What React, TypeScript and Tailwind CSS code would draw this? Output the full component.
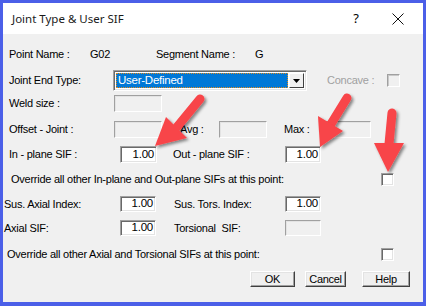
import React from "react";

type EditProps = { w: string; value?: string; disabled?: boolean };

const Edit = ({ w, value, disabled }: EditProps) => {
    const look = disabled
        ? "bg-[#f0f0f0] border border-t-[#a0a0a0] border-l-[#a0a0a0] border-b-white border-r-white shadow-[inset_1px_1px_0_#e3e3e3]"
        : "bg-white border border-t-[#a0a0a0] border-l-[#a0a0a0] border-b-white border-r-white shadow-[inset_1px_1px_0_#696969,inset_-1px_-1px_0_#e3e3e3]";
    return (
        <div className={`${w} h-full ${look} flex items-center justify-end pr-[2px] text-[11.5px] text-black`}>
            {value}
        </div>
    );
};

const Check = ({ disabled }: { disabled?: boolean }) => (
    <div
        className={`w-[13px] h-[13px] shrink-0 border border-t-[#a0a0a0] border-l-[#a0a0a0] border-b-white border-r-white ${
            disabled ? "bg-[#f0f0f0] shadow-[inset_1px_1px_0_#c8c8c8]" : "bg-white shadow-[inset_1px_1px_0_#696969,inset_-1px_-1px_0_#e3e3e3]"
        }`}
    />
);

const Btn = ({ w, label, cls }: { w: string; label: string; cls?: string }) => (
    <div
        className={`${w} ${cls ?? ""} h-full flex items-center justify-center bg-[#f0f0f0] border border-t-white border-l-white border-b-[#404040] border-r-[#404040] shadow-[inset_-1px_-1px_0_#a0a0a0,inset_1px_1px_0_#e3e3e3] text-[11px] tracking-[-0.3px]`}
    >
        {label}
    </div>
);

const Arrow = ({ tail, base, tip, c1, c2 }: { tail: number[]; base: number[]; tip: number[]; c1: number[]; c2: number[] }) => (
    <g filter="url(#shadow)">
        <line x1={tail[0]} y1={tail[1]} x2={base[0]} y2={base[1]} stroke="#f84448" strokeWidth="9" strokeLinecap="round" />
        <polygon points={`${c1[0]},${c1[1]} ${tip[0]},${tip[1]} ${c2[0]},${c2[1]}`} fill="#f84448" />
    </g>
);

const App = () => {
    return (
        <div className="relative w-[426px] h-[306px] font-['Liberation_Sans',Arial,sans-serif] text-black">
            <div className="w-full h-full flex flex-col border-[3px] border-b-4 border-[#4b5fe8] bg-[#f0f0f0]">
                {/* title bar */}
                <div className="h-[31px] bg-white flex items-center pl-[9px] shrink-0">
                    <span className="font-['Noto_Sans',sans-serif] text-[11.5px] text-[#1a1a1a]">Joint Type &amp; User SIF</span>
                    <div className="grow"></div>
                    <span className="font-['Noto_Sans',sans-serif] text-[13px] mr-[33px]">?</span>
                    <svg width="12" height="12" viewBox="0 0 12 12" className="mr-[19px]">
                        <path d="M0.5 0.5 L11.5 11.5 M11.5 0.5 L0.5 11.5" stroke="#111" strokeWidth="1" />
                    </svg>
                </div>

                {/* body */}
                <div className="flex flex-col pl-[6px] text-[11px] tracking-[-0.25px]">
                    <div className="mt-[12px] h-[16px] flex items-center">
                        <span className="w-[81px] shrink-0">Point Name :</span>
                        <span className="w-[66px] shrink-0">G02</span>
                        <span className="w-[99px] shrink-0">Segment Name :</span>
                        <span>G</span>
                    </div>

                    <div className="mt-[8px] h-[21px] flex items-center">
                        <span className="w-[104px] shrink-0">Joint End Type:</span>
                        <div className="w-[194px] h-full shrink-0 flex border border-t-[#a0a0a0] border-l-[#a0a0a0] border-b-white border-r-white shadow-[inset_1px_1px_0_#696969,inset_-1px_-1px_0_#e3e3e3] bg-white p-[2px]">
                            <div className="flex-1 bg-[#0078d7] outline-1 outline-dotted outline-[#e08a1e] -outline-offset-1 flex items-center pl-[2px] text-white text-[11.5px]">
                                User-Defined
                            </div>
                            <div className="w-[15px] ml-[1px] flex items-center justify-center bg-[#f0f0f0] border border-t-white border-l-white border-b-[#404040] border-r-[#404040]">
                                <svg width="7" height="4" viewBox="0 0 7 4"><path d="M0 0 H7 L3.5 4 Z" fill="#000" /></svg>
                            </div>
                        </div>
                        <span className="w-[20px] shrink-0"></span>
                        <span className="w-[60px] shrink-0 text-[#a0a0a0]">Concave :</span>
                        <Check disabled />
                    </div>

                    <div className="mt-[4px] h-[17px] flex items-center">
                        <span className="w-[105px] shrink-0">Weld size :</span>
                        <Edit w="w-[48px]" disabled />
                    </div>

                    <div className="mt-[9px] h-[17px] flex items-center">
                        <span className="w-[105px] shrink-0">Offset - Joint :</span>
                        <Edit w="w-[48px]" disabled />
                        <span className="w-[18px] shrink-0"></span>
                        <span className="w-[39px] shrink-0">Avg :</span>
                        <Edit w="w-[48px]" disabled />
                        <span className="w-[17px] shrink-0"></span>
                        <span className="w-[39px] shrink-0">Max :</span>
                        <Edit w="w-[48px]" disabled />
                    </div>

                    <div className="mt-[8px] h-[17px] flex items-center">
                        <span className="w-[111px] shrink-0">In - plane SIF :</span>
                        <Edit w="w-[37px]" value="1.00" />
                        <span className="w-[16px] shrink-0"></span>
                        <span className="w-[112px] shrink-0">Out - plane SIF :</span>
                        <Edit w="w-[36px]" value="1.00" />
                    </div>

                    <div className="mt-[10px] h-[13px] flex items-center">
                        <span className="pl-[2px]">Override all other In-plane and Out-plane SIFs at this point:</span>
                        <div className="ml-auto mr-[29px]"><Check /></div>
                    </div>

                    <div className="mt-[10px] h-[16px] flex items-center">
                        <span className="w-[116px] -ml-[5px] shrink-0">Sus. Axial Index:</span>
                        <Edit w="w-[36px]" value="1.00" />
                        <span className="w-[18px] shrink-0"></span>
                        <span className="w-[111px] shrink-0">Sus. Tors. Index:</span>
                        <Edit w="w-[36px]" value="1.00" />
                    </div>

                    <div className="mt-[8px] h-[16px] flex items-center">
                        <span className="w-[116px] -ml-[5px] shrink-0">Axial SIF:</span>
                        <Edit w="w-[36px]" value="1.00" />
                        <span className="w-[18px] shrink-0"></span>
                        <span className="w-[111px] shrink-0 whitespace-pre">Torsional  SIF:</span>
                        <Edit w="w-[36px]" disabled />
                    </div>

                    <div className="mt-[12px] h-[13px] flex items-center">
                        <span className="-ml-[2px]">Override all other Axial and Torsional SIFs at this point:</span>
                        <div className="ml-auto mr-[29px]"><Check /></div>
                    </div>

                    <div className="mt-[10px] h-[16px] flex justify-end mr-[13px]">
                        <Btn w="w-[45px]" label="OK" />
                        <Btn w="w-[41px]" label="Cancel" cls="ml-[10px]" />
                        <Btn w="w-[48px]" label="Help" cls="ml-[16px]" />
                    </div>
                </div>
            </div>

            {/* red annotation arrows */}
            <svg className="absolute top-0 left-0 pointer-events-none" width="426" height="306" viewBox="0 0 426 306">
                <defs>
                    <filter id="shadow" x="-30%" y="-30%" width="160%" height="160%">
                        <feDropShadow dx="2" dy="2" stdDeviation="1.5" floodColor="#000" floodOpacity="0.45" />
                    </filter>
                </defs>
                <Arrow tail={[200, 99]} base={[177, 127]} tip={[155, 146]} c1={[166, 117]} c2={[187, 138]} />
                <Arrow tail={[347, 98]} base={[331, 124]} tip={[320, 147]} c1={[318, 116]} c2={[343, 131]} />
                <Arrow tail={[392, 113]} base={[389, 144]} tip={[388, 172]} c1={[374, 143]} c2={[404, 143]} />
            </svg>
        </div>
    );
};

export default App;
